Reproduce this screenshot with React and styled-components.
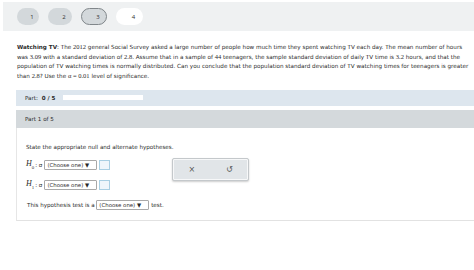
import React from 'react';
import styled, { createGlobalStyle } from 'styled-components';

const GlobalStyle = createGlobalStyle`
  body {
    margin: 0;
    background: #ffffff;
    font-family: "DejaVu Sans", Verdana, sans-serif;
    color: #2b2b2b;
  }
`;

const steps = [
  { n: 1, w: 22, state: 'done' },
  { n: 2, w: 24, state: 'done' },
  { n: 3, w: 26, state: 'current' },
  { n: 4, w: 27, state: 'todo' },
];

const App = () => {
  return (
    <React.Fragment>
      <GlobalStyle />
      <Page>
        <TopBar>
          {steps.map((s) => (
            <Pill key={s.n} $w={s.w} $state={s.state}>
              {s.n}
            </Pill>
          ))}
        </TopBar>
        <Content>
          <Problem>
            <b>Watching TV</b>: The <Num>2012</Num> general Social Survey asked a
            large number of people how much time they spent watching TV each day.
            The mean number of hours was <Num>3.09</Num> with a standard deviation
            of <Num>2.8</Num>. Assume that in a sample of <Num>44</Num> teenagers,
            the sample standard deviation of daily TV time is <Num>3.2</Num> hours,
            and that the population of TV watching times is normally distributed.
            Can you conclude that the population standard deviation of TV watching
            times for teenagers is greater than <Num>2.8</Num>? Use the{' '}
            <Num>α = 0.01</Num> level of significance.
          </Problem>
          <PartBar>
            Part: <b>0 / 5</b>
            <Progress />
          </PartBar>
          <PartHead>Part 1 of 5</PartHead>
          <Panel>
            <Line>State the appropriate null and alternate hypotheses.</Line>
            <HypRow>
              <Hyp>
                H<sub>0</sub>
              </Hyp>
              <Sym>: σ</Sym>
              <Select>(Choose one) ▼</Select>
              <AnswerBox />
            </HypRow>
            <HypRow>
              <Hyp>
                H<sub>1</sub>
              </Hyp>
              <Sym>: σ</Sym>
              <Select>(Choose one) ▼</Select>
              <AnswerBox />
            </HypRow>
            <TestRow>
              This hypothesis test is a <Select>(Choose one) ▼</Select> test.
            </TestRow>
            <Popup>
              <PopBtn>×</PopBtn>
              <PopBtn>↺</PopBtn>
            </Popup>
          </Panel>
        </Content>
      </Page>
    </React.Fragment>
  );
};

export default App;

const Page = styled.div`
  width: 474px;
  height: 270px;
  padding-top: 2px;
  box-sizing: border-box;
  overflow: hidden;
`;

const TopBar = styled.div`
  display: flex;
  align-items: center;
  gap: 9px;
  height: 29px;
  margin-left: 3px;
  padding-left: 14px;
  background: #eff1f2;
`;

const Pill = styled.div`
  width: ${(p) => p.$w}px;
  height: 17px;
  box-sizing: border-box;
  padding-left: 8px;
  border-radius: 9px;
  display: flex;
  align-items: center;
  justify-content: center;
  font-family: "Open Sans", sans-serif;
  font-size: 6px;
  color: #333;
  background: ${(p) => (p.$state === 'todo' ? '#ffffff' : '#d3d8db')};
  border: 1px solid ${(p) => (p.$state === 'current' ? '#80868a' : 'transparent')};
`;

const Content = styled.div`
  padding-left: 16px;
`;

const Problem = styled.p`
  margin: 12px 0 0 1px;
  padding-right: 2px;
  font-size: 5.65px;
  line-height: 9.7px;
`;

const Num = styled.span`
  font-family: "Liberation Serif", serif;
  font-size: 6.5px;
  line-height: 0;
`;

const PartBar = styled.div`
  display: flex;
  align-items: center;
  height: 16px;
  margin-top: 8px;
  padding-left: 9px;
  background: #dde6ee;
  font-size: 5.6px;
  white-space: pre;
  b {
    margin-left: 2px;
  }
`;

const Progress = styled.div`
  width: 80px;
  height: 5px;
  margin-left: 8px;
  background: #ffffff;
`;

const PartHead = styled.div`
  display: flex;
  align-items: center;
  height: 18px;
  margin-top: 4px;
  padding-left: 9px;
  background: #d4d9dc;
  font-size: 5.6px;
`;

const Panel = styled.div`
  position: relative;
  height: 93px;
  box-sizing: border-box;
  padding: 15px 0 0 9px;
  border-left: 1px solid #e6e6e6;
  border-bottom: 1px solid #e2e2e2;
  font-size: 5.6px;
`;

const Line = styled.div`
  height: 8px;
  line-height: 8px;
`;

const HypRow = styled.div`
  display: flex;
  align-items: center;
  height: 11px;
  margin-top: 9px;
`;

const Hyp = styled.span`
  font-family: "Liberation Serif", serif;
  font-style: italic;
  font-size: 8px;
  line-height: 0;
  sub {
    font-style: normal;
    font-size: 4.8px;
  }
`;

const Sym = styled.span`
  margin: 0 2px 0 1px;
  font-size: 5.6px;
`;

const Select = styled.span`
  display: inline-flex;
  align-items: center;
  width: 53px;
  height: 10px;
  box-sizing: border-box;
  padding-left: 2px;
  border: 1px solid #a9a9a9;
  border-radius: 1px;
  background: #ffffff;
  font-size: 5.4px;
  white-space: pre;
  vertical-align: middle;
`;

const AnswerBox = styled.span`
  width: 11px;
  height: 10px;
  margin-left: 2px;
  box-sizing: border-box;
  border: 1px solid #a8cfe3;
  background: #eef6fb;
`;

const TestRow = styled.div`
  margin-top: 9px;
  height: 11px;
  line-height: 11px;
  padding-left: 1px;
`;

const Popup = styled.div`
  position: absolute;
  top: 30px;
  left: 155px;
  width: 77px;
  height: 23px;
  box-sizing: border-box;
  display: flex;
  align-items: center;
  background: #e1e5e8;
  border: 1px solid #c4c8cb;
  border-radius: 2px;
  box-shadow: 0 1px 2px rgba(0, 0, 0, 0.2), inset 0 0 0 1px #f7f8f9;
`;

const PopBtn = styled.span`
  flex: 1;
  text-align: center;
  font-size: 8px;
  color: #555;
`;
